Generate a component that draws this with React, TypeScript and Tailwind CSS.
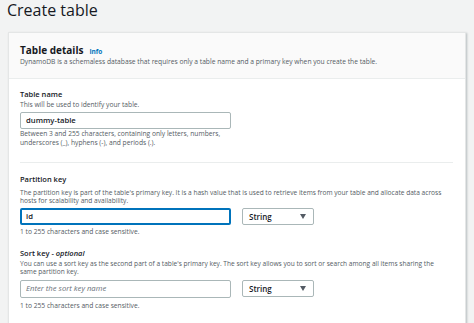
function Select() {
  return (
    <div className="flex h-[17px] w-[72px] shrink-0 items-center justify-between rounded-[2px] border border-[#aab7b8] bg-white pl-[6px] pr-[7px]">
      <span className="text-[8px] font-semibold leading-none text-[#16191f]">String</span>
      <svg width="6" height="5" viewBox="0 0 6 5">
        <path d="M0 0h6L3 5z" fill="#545b64" />
      </svg>
    </div>
  );
}

export default function App() {
  return (
    <div className="h-[323px] w-[474px] overflow-hidden bg-[#f2f3f3] font-['Open_Sans',sans-serif] text-[#16191f]">
      <h1 className="pl-[7px] pt-0 text-[16px] font-normal leading-[20px]">Create table</h1>

      <div className="ml-[8px] mr-[8px] mt-[12px] border border-[#e4e6e6] bg-white shadow-[1px_1px_2px_rgba(0,28,36,0.25)]">
        <div className="border-b border-[#eaeded] bg-[#fafafa] px-[11px] pb-[12px] pt-[10px]">
          <div className="flex items-baseline gap-[6px]">
            <h2 className="text-[10px] font-bold leading-[14px]">Table details</h2>
            <span className="text-[6.5px] font-bold text-[#0073bb]">Info</span>
          </div>
          <p className="mt-[1px] text-[6.7px] leading-[8px] text-[#545b64]">
            DynamoDB is a schemaless database that requires only a table name and a primary key when you create the table.
          </p>
        </div>

        <div className="px-[11px] pb-[18px] pt-[10px]">
          <div className="text-[7.5px] font-semibold leading-[10px]">Table name</div>
          <p className="mt-[2px] text-[6.7px] leading-[8px] text-[#545b64]">This will be used to identify your table.</p>
          <div className="mt-[3px] flex h-[17px] w-[211px] items-center rounded-[2px] border border-[#aab7b8] px-[5px] text-[7.7px] font-semibold">
            dummy-table
          </div>
          <p className="text-[6.7px] leading-[9px] text-[#545b64]">
            Between 3 and 255 characters, containing only letters, numbers,
            <br />
            underscores (_), hyphens (-), and periods (.).
          </p>

          <div className="mr-[1px] mt-[15px] border-t border-[#eaeded]" />

          <div className="mt-[11px] text-[7.5px] font-semibold leading-[10px]">Partition key</div>
          <p className="mt-[5px] text-[6.6px] leading-[8px] text-[#545b64]">
            The partition key is part of the table's primary key. It is a hash value that is used to retrieve items from your table and allocate data across
            <br />
            hosts for scalability and availability.
          </p>
          <div className="mt-[3px] flex gap-[11px]">
            <div className="flex h-[17px] w-[211px] items-center rounded-[2px] border-2 border-[#0073bb] px-[4px] text-[7.7px] font-semibold">
              id
            </div>
            <Select />
          </div>
          <p className="mt-[2px] text-[6.7px] leading-[9px] text-[#545b64]">1 to 255 characters and case sensitive.</p>

          <div className="mt-[12px] text-[7.5px] font-semibold leading-[10px]">
            Sort key - <span className="italic">optional</span>
          </div>
          <p className="mt-[2px] text-[6.6px] leading-[8px] text-[#545b64]">
            You can use a sort key as the second part of a table's primary key. The sort key allows you to sort or search among all items sharing the
            <br />
            same partition key.
          </p>
          <div className="mt-[4px] flex gap-[11px]">
            <div className="flex h-[18px] w-[211px] items-center rounded-[2px] border border-[#aab7b8] px-[5px] text-[7.7px] italic text-[#687078]">
              Enter the sort key name
            </div>
            <Select />
          </div>
          <p className="mt-[3px] text-[6.7px] leading-[9px] text-[#545b64]">1 to 255 characters and case sensitive.</p>
        </div>
      </div>
    </div>
  );
}
